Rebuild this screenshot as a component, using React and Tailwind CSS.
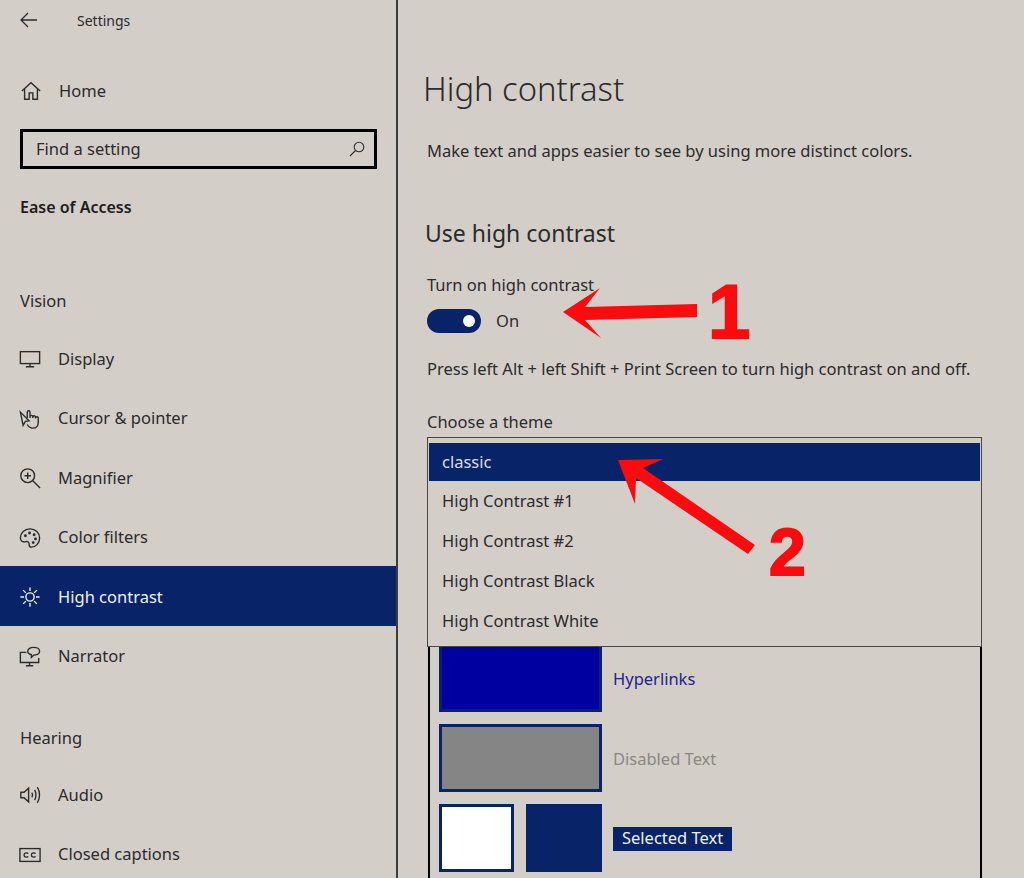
import React from "react";

const ink = "text-[#2b2b2b]";

function Icon({ children, className = "" }) {
  return (
    <svg viewBox="0 0 24 24" fill="none" stroke="currentColor" strokeWidth="1.5" className={"w-[22px] h-[22px] shrink-0 " + className}>
      {children}
    </svg>
  );
}

const icons = {
  home: <path d="M2 12 12 3l10 9M5 10v11h5v-7h4v7h5V10" />,
  display: (
    <>
      <rect x="1.5" y="4" width="21" height="13" />
      <path d="M12 17v3M7.5 20.5h9" />
    </>
  ),
  cursor: (
    <>
      <path d="M1.5 4.5 11 14l-4 .5-2.500 4.500z" />
      <path d="M9 11V4.500a1.500 1.500 0 0 1 3 0V11m0-1.500a1.400 1.400 0 0 1 3 0V11m0-1a1.400 1.400 0 0 1 3 0v1.500m0-.5a1.400 1.400 0 0 1 3 0v4.500c0 4-2.500 6.500-6 6.500-3 0-4.500-1.500-6-4" />
    </>
  ),
  magnifier: (
    <>
      <circle cx="9.500" cy="9.500" r="7.500" />
      <path d="m15 15 8 8M9.500 6v7M6 9.500h7" />
    </>
  ),
  palette: (
    <>
      <path d="M12 2c6 0 10.500 4.500 10.500 10 0 6-4.500 10-9 10-2.500 0-2.500-2-2.500-3.500 0-2-1.500-3-3.500-2.500-3 .8-6-.5-6-4C1.500 6.500 6 2 12 2z" />
      <circle cx="7" cy="9.500" r=".8" fill="currentColor" />
      <circle cx="11.500" cy="6.500" r=".8" fill="currentColor" />
      <circle cx="16.500" cy="8.500" r=".8" fill="currentColor" />
      <circle cx="18" cy="13" r=".8" fill="currentColor" />
      <circle cx="15.500" cy="17" r=".8" fill="currentColor" />
    </>
  ),
  sun: (
    <>
      <circle cx="12" cy="12" r="4.500" />
      <path d="M12 1.500v4M12 18.500v4M1.500 12h4M18.500 12h4M4.500 4.500l3 3M16.500 16.500l3 3M4.500 19.500l3-3M16.500 7.500l3-3" />
    </>
  ),
  narrator: (
    <>
      <path d="M8 7H1.500v11h20v-5" />
      <path d="M11.500 18v3M7.500 21.500h8" />
      <path d="M16 1.500c3.500 0 6.500 1.700 6.500 4.300S19.500 10 16 10l-2.500 2.500V9.500C11 9 9.500 7.500 9.500 5.800 9.500 3.200 12.500 1.500 16 1.500z" />
    </>
  ),
  audio: (
    <>
      <path d="M2 9v6h3.500l5 4.500v-15L5.500 9z" />
      <path d="M14 9.500c1 1.500 1 3.500 0 5M17 6.500c2 3 2 8 0 11M20 3.500c3.200 5 3.200 12 0 17" />
    </>
  ),
  cc: (
    <>
      <rect x="1" y="5" width="22" height="14" />
      <path d="M10 10.500C9.500 9.500 5.500 9 5.500 12s4 2.500 4.500 1.500M18 10.500c-.5-1-4.500-1.500-4.500 1.500s4 2.500 4.500 1.500" />
    </>
  ),
};

function NavItem({ icon, label, active, className = "" }) {
  return (
    <div className={"flex items-center h-[59.500px] pt-[3px] pl-[19px] gap-[17px] " + (active ? "bg-[#082368] text-[#eef0f5] " : ink + " ") + className}>
      <Icon>{icons[icon]}</Icon>
      <span>{label}</span>
    </div>
  );
}

function Sidebar() {
  return (
    <aside className="w-[398px] shrink-0 border-r-2 border-[#3c3c3c] h-full text-[16.500px]">
      <div className={"flex items-center h-[40px] pl-[20px] text-[14px] " + ink}>
        <svg viewBox="0 0 18 16" fill="none" stroke="currentColor" strokeWidth="1.300" className="w-[18px] h-[16px]">
          <path d="M17 8H1M8 1 1 8l7 7" />
        </svg>
        <span className="ml-[39px]">Settings</span>
      </div>
      <div className={"flex items-center mt-[41px] h-[20px] pl-[20px] gap-[17px] " + ink}>
        <Icon>{icons.home}</Icon>
        <span>Home</span>
      </div>
      <div className={"flex items-center justify-between mx-[20px] w-[357px] mt-[28px] h-[40px] border-[3px] border-black pl-[13px] pr-[9px] " + ink}>
        <span>Find a setting</span>
        <svg viewBox="0 0 16 16" fill="none" stroke="currentColor" strokeWidth="1.100" className="w-[16px] h-[16px]">
          <circle cx="10" cy="6" r="4.800" />
          <path d="M6.500 9.500 1 15" />
        </svg>
      </div>
      <div className="pl-[20px] mt-[26px] h-[24px] leading-[24px] text-[16px] font-semibold text-[#1c1c1c]">Ease of Access</div>
      <div className={"pl-[20px] mt-[70px] h-[24px] leading-[24px] " + ink}>Vision</div>
      <div className="mt-[15px]">
        <NavItem icon="display" label="Display" />
        <NavItem icon="cursor" label="Cursor & pointer" />
        <NavItem icon="magnifier" label="Magnifier" />
        <NavItem icon="palette" label="Color filters" />
        <NavItem icon="sun" label="High contrast" active />
        <NavItem icon="narrator" label="Narrator" />
      </div>
      <div className={"pl-[20px] mt-[41px] h-[24px] leading-[24px] " + ink}>Hearing</div>
      <div className="mt-[14px]">
        <NavItem icon="audio" label="Audio" />
        <NavItem icon="cc" label="Closed captions" />
      </div>
    </aside>
  );
}

function Swatch({ className = "" }) {
  return <div className={"border-[3px] border-[#082368] " + className} />;
}

function Main() {
  return (
    <main className={"relative flex-1 pl-[29px] text-[16.500px] " + ink}>
      <h1 className="ml-[-4px] mt-[66px] h-[46px] leading-[46px] text-[32.800px] font-light">High contrast</h1>
      <p className="mt-[27px] h-[24px] leading-[24px]">Make text and apps easier to see by using more distinct colors.</p>
      <h2 className="ml-[-2px] mt-[54px] h-[32px] leading-[32px] text-[23px]">Use high contrast</h2>
      <p className="mt-[24px] h-[24px] leading-[24px]">Turn on high contrast</p>
      <div className="flex items-center mt-[12px] h-[24px]">
        <div className="flex items-center justify-end w-[54px] h-[24px] rounded-full bg-[#082368] pr-[6px]">
          <div className="w-[12px] h-[12px] rounded-full bg-white" />
        </div>
        <span className="ml-[15px] mt-[1px]">On</span>
      </div>
      <p className="mt-[24px] h-[24px] leading-[24px]">Press left Alt + left Shift + Print Screen to turn high contrast on and off.</p>
      <p className="mt-[29px] h-[24px] leading-[24px]">Choose a theme</p>
      <div className="mt-[3px] w-[555px] h-[210px] border border-[#4a4640] pt-[5px] px-[1px]">
        <div className="flex items-center h-[38px] pl-[13px] bg-[#082368] text-[#d9dfee]">classic</div>
        <div className="flex items-center h-[40px] pt-[1px] pl-[13px]">High Contrast #1</div>
        <div className="flex items-center h-[40px] pt-[1px] pl-[13px]">High Contrast #2</div>
        <div className="flex items-center h-[40px] pl-[13px]">High Contrast Black</div>
        <div className="flex items-center h-[39px] pt-[1px] pl-[13px]">High Contrast White</div>
      </div>
      <div className="w-[554px] ml-[1px] h-[300px] border-x-2 border-black pl-[9px] flex flex-col gap-[12px]">
        <div className="flex items-center h-[65px]">
          <Swatch className="w-[163px] h-[65px] bg-[#0000a0] border-t-0" />
          <span className="ml-[11px] text-[#23238c]">Hyperlinks</span>
        </div>
        <div className="flex items-center h-[68px]">
          <Swatch className="w-[163px] h-[68px] bg-[#858585]" />
          <span className="ml-[11px] mt-[2px] text-[#8a8781]">Disabled Text</span>
        </div>
        <div className="flex items-center h-[68px]">
          <Swatch className="w-[75px] h-[68px] bg-white" />
          <Swatch className="w-[76px] h-[68px] ml-[12px] bg-[#082368]" />
          <span className="ml-[11px] mt-[1px] flex items-center h-[24px] px-[9px] bg-[#082368] text-[#eef0f5]">Selected Text</span>
        </div>
      </div>

      {/* red annotations over the screenshot */}
      <svg viewBox="0 0 140 70" className="absolute left-[165px] top-[285px] w-[140px] h-[70px]" fill="#fb0a0e">
        <path d="M0 27 37 3 22 22 134 19V32L22 35 38 53z" />
      </svg>
      <span className="absolute left-[310px] top-[257px] text-[76px] leading-[110px] font-black text-[#fb0a0e] [-webkit-text-stroke:2px_#fb0a0e] font-['Liberation_Sans',sans-serif]">1</span>
      <svg viewBox="0 0 140 105" className="absolute left-[220px] top-[455px] w-[140px] h-[105px]" fill="#fb0a0e">
        <path d="M0 5 45 4 25 13 137 90 130 99 18 23 17 49z" />
      </svg>
      <span className="absolute left-[371px] top-[504px] text-[66px] leading-[96px] font-black text-[#fb0a0e] [-webkit-text-stroke:2px_#fb0a0e] font-['Liberation_Sans',sans-serif]">2</span>
    </main>
  );
}

export default function App() {
  return (
    <div className="flex w-[1024px] h-[878px] overflow-hidden bg-[#d4cec8] font-['Noto_Sans','Open_Sans',sans-serif]">
      <Sidebar />
      <Main />
    </div>
  );
}
